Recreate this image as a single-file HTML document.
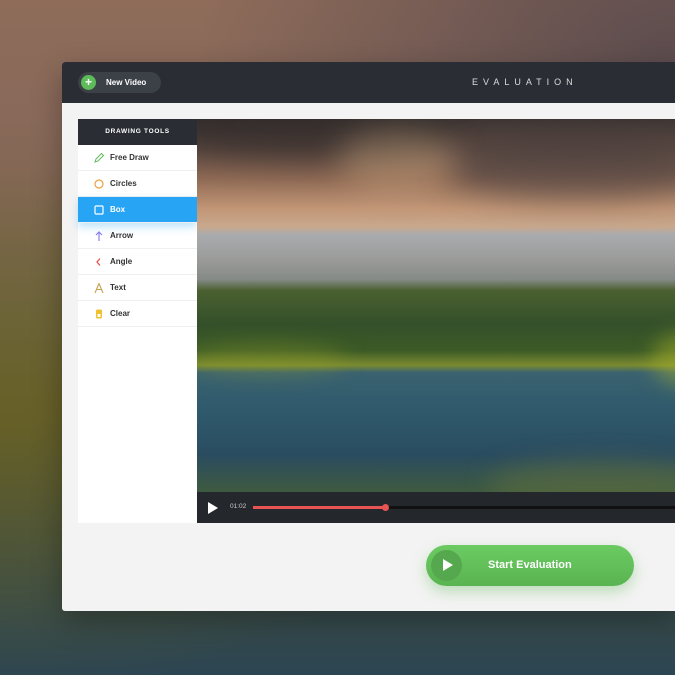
<!DOCTYPE html>
<html><head><meta charset="utf-8"><style>
*{margin:0;padding:0;box-sizing:border-box}
body{width:675px;height:675px;overflow:hidden;position:relative;font-family:"Liberation Sans",sans-serif;
background:linear-gradient(180deg,#8f6c5a 0%,#86685a 25%,#6e6448 45%,#5f5c30 62%,#445040 80%,#2c4552 100%);}
.bg2{position:absolute;inset:0;background:radial-gradient(ellipse at 100% 10%,rgba(60,55,70,.6),transparent 50%),radial-gradient(ellipse at 0% 60%,rgba(110,100,30,.5),transparent 50%)}
.panel{position:absolute;left:62px;top:62px;width:620px;height:549px;background:#f3f3f3;border-radius:3px;overflow:hidden;box-shadow:0 10px 30px rgba(0,0,0,.3)}
.hdr{height:41px;background:#2a2d33;position:relative}
.nv{position:absolute;left:16px;top:10px;width:83px;height:21px;border-radius:11px;background:#3c4047;color:#fff;font-size:8px;font-weight:bold;line-height:21px;padding-left:28px}
.nv i{position:absolute;left:3px;top:3px;width:15px;height:15px;border-radius:50%;background:#5dbb5a;color:#fff;font-style:normal;text-align:center;line-height:15px;font-size:12px}
.ttl{position:absolute;left:410px;top:15px;color:#ddd;font-size:9px;letter-spacing:5px}
.side{position:absolute;left:16px;top:57px;width:119px;height:404px;background:#fff}
.sh{height:26px;background:#2a2d33;color:#fff;font-size:6.5px;font-weight:bold;letter-spacing:.7px;text-align:center;line-height:26px}
.it{height:26px;border-bottom:1px solid #f0f0f0;font-size:8px;color:#333;font-weight:bold;line-height:26px;padding-left:32px;position:relative}
.it svg{position:absolute;left:16px;top:8px}
.sel{background:#27a4f3;color:#fff;box-shadow:0 4px 8px rgba(39,164,243,.3)}
.vid{position:absolute;left:135px;top:57px;width:490px;height:373px;overflow:hidden;
background:linear-gradient(180deg,#3e3634 0%,#5e4a42 8%,#8f6a55 16%,#c29676 24%,#c8a88e 29%,#a9abae 31%,#9a9a98 38%,#858a86 43%,#4a6030 46%,#34502a 55%,#3b5a26 62%,#7a8a30 66%,#3a6270 68%,#2f5a6c 78%,#2a4c60 90%,#3e5a40 100%)}
.vid .c{position:absolute;border-radius:50%}
.ctl{position:absolute;left:135px;top:430px;width:490px;height:31px;background:#24272c}
.pl{position:absolute;left:11px;top:10px;width:0;height:0;border-left:10px solid #fff;border-top:6px solid transparent;border-bottom:6px solid transparent}
.tm{position:absolute;left:33px;top:11px;color:#ccc;font-size:6.5px}
.bar{position:absolute;left:56px;top:14px;width:440px;height:3px;background:#111}
.prog{position:absolute;left:56px;top:14px;width:133px;height:3px;background:#e85454}
.dot{position:absolute;left:185px;top:12px;width:7px;height:7px;border-radius:50%;background:#e85454}
.btn{position:absolute;left:364px;top:483px;width:208px;height:41px;border-radius:21px;background:linear-gradient(#6bcb62,#5ab451);box-shadow:0 6px 14px rgba(90,180,80,.35);color:#fff;font-weight:bold;font-size:11px;line-height:41px;padding-left:62px}
.btn i{position:absolute;left:5px;top:5px;width:31px;height:31px;border-radius:50%;background:#56a84e}
.btn i:after{content:"";position:absolute;left:12px;top:9px;border-left:10px solid #fff;border-top:6px solid transparent;border-bottom:6px solid transparent}
</style></head><body><div class="bg2"></div>
<div class="panel">
<div class="hdr"><div class="nv"><i>+</i>New Video</div><div class="ttl">EVALUATION</div></div>
<div class="side"><div class="sh">DRAWING TOOLS</div>
<div class="it"><svg width="10" height="10" viewBox="0 0 10 10"><path d="M1 9 L2 6 L7.5 0.5 L9.5 2.5 L4 8 Z" fill="none" stroke="#5dbb5a" stroke-width="1"/></svg>Free Draw</div>
<div class="it"><svg width="10" height="10" viewBox="0 0 10 10"><circle cx="5" cy="5" r="4" fill="none" stroke="#f0a040" stroke-width="1.2"/></svg>Circles</div>
<div class="it sel"><svg width="10" height="10" viewBox="0 0 10 10"><rect x="1" y="1" width="8" height="8" rx="1" fill="none" stroke="#fff" stroke-width="1.2"/></svg>Box</div>
<div class="it"><svg width="10" height="10" viewBox="0 0 10 10"><path d="M5 10 V1 M2 4 L5 1 L8 4" fill="none" stroke="#8a7ef0" stroke-width="1.2"/></svg>Arrow</div>
<div class="it"><svg width="10" height="10" viewBox="0 0 10 10"><path d="M6 1.5 L3 5 L6 8.5" fill="none" stroke="#e85454" stroke-width="1.3"/></svg>Angle</div>
<div class="it"><svg width="10" height="10" viewBox="0 0 10 10"><path d="M1 10 L5 0.5 L9 10 M2.8 6.5 H7.2" fill="none" stroke="#c9a050" stroke-width="1.1"/></svg>Text</div>
<div class="it"><svg width="10" height="10" viewBox="0 0 10 10"><rect x="2" y="0.5" width="6" height="9" rx="1.5" fill="#f0c030"/><rect x="3.5" y="5" width="3" height="3" fill="#fff"/></svg>Clear</div>
</div>
<div class="vid">
<div class="c" style="left:-40px;top:-30px;width:300px;height:70px;background:rgba(40,35,35,.5);filter:blur(15px)"></div>
<div class="c" style="left:250px;top:20px;width:260px;height:60px;background:rgba(60,55,60,.5);filter:blur(15px)"></div>
<div class="c" style="left:140px;top:10px;width:120px;height:60px;background:rgba(240,200,150,.3);filter:blur(15px)"></div>
<div class="c" style="left:-10px;top:225px;width:160px;height:30px;background:rgba(150,160,40,.35);filter:blur(10px)"></div>
<div class="c" style="left:290px;top:340px;width:230px;height:50px;background:rgba(110,120,60,.4);filter:blur(12px)"></div>
<div class="c" style="left:455px;top:215px;width:60px;height:50px;background:rgba(170,180,40,.5);filter:blur(10px)"></div>
</div>
<div class="ctl"><div class="pl"></div><div class="tm">01:02</div><div class="bar"></div><div class="prog"></div><div class="dot"></div></div>
<div class="btn"><i></i>Start Evaluation</div>
</div>
</body></html>
